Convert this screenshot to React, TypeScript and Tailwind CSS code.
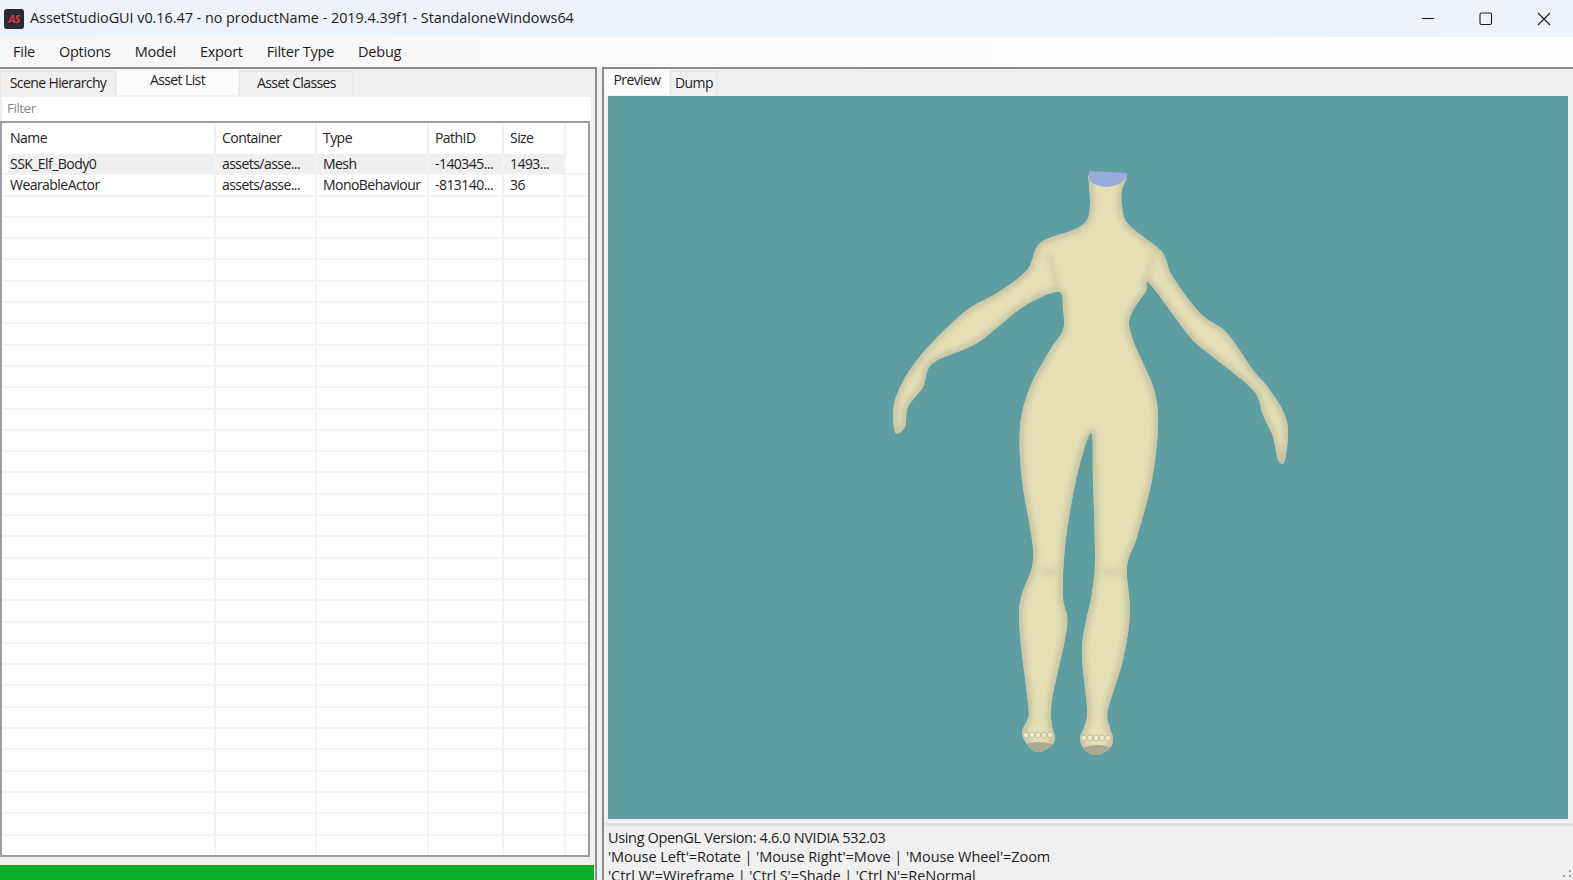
import React from "react";

const font = { fontFamily: '"Open Sans", "Noto Sans", sans-serif' };

const outline: [number, number][] = [
  [1090, 174], [1108, 175], [1126, 176], [1122, 190], [1122, 205], [1128, 224], [1157, 247], [1165, 257], [1173, 277], [1200, 313],
  [1227, 333], [1253, 370], [1270, 390], [1287, 422], [1285, 460], [1278, 460], [1273, 437], [1263, 415], [1253, 390], [1213, 357],
  [1190, 337], [1150, 284], [1146, 291], [1130, 317], [1132, 337], [1143, 363], [1155, 393], [1158, 427], [1152, 480], [1137, 537],
  [1127, 567], [1130, 613], [1123, 660], [1108, 710], [1110, 728], [1113, 738], [1110, 748], [1097, 755], [1085, 750], [1080, 738],
  [1085, 725], [1087, 707], [1082, 647], [1092, 593], [1095, 557], [1093, 480], [1091, 433], [1076, 480], [1065, 547], [1063, 597],
  [1067, 627], [1052, 700], [1052, 725], [1055, 737], [1052, 745], [1040, 752], [1030, 748], [1022, 733], [1028, 718], [1028, 703],
  [1019, 613], [1032, 567], [1032, 540], [1022, 480], [1020, 427], [1030, 387], [1050, 350], [1063, 330], [1063, 310], [1058, 292],
  [1023, 307], [977, 343], [933, 363], [923, 387], [908, 407], [905, 427], [895, 432], [895, 400], [917, 360], [963, 313],
  [997, 293], [1027, 270], [1040, 243], [1073, 230], [1087, 220], [1090, 203], [1089, 184],
];

function smoothPath(pts: [number, number][]) {
  const n = pts.length;
  const t = 6;
  let d = `M${pts[0][0]} ${pts[0][1]}`;
  for (let i = 0; i < n; i++) {
    const p0 = pts[(i - 1 + n) % n];
    const p1 = pts[i];
    const p2 = pts[(i + 1) % n];
    const p3 = pts[(i + 2) % n];
    const c1x = p1[0] + (p2[0] - p0[0]) / t;
    const c1y = p1[1] + (p2[1] - p0[1]) / t;
    const c2x = p2[0] - (p3[0] - p1[0]) / t;
    const c2y = p2[1] - (p3[1] - p1[1]) / t;
    d += ` C${c1x} ${c1y} ${c2x} ${c2y} ${p2[0]} ${p2[1]}`;
  }
  return d + " Z";
}

const toesLeft = [1026, 1032, 1038, 1044, 1050];
const toesRight = [1084, 1090, 1096, 1102, 1108];

function Mannequin() {
  const d = smoothPath(outline);
  return (
    <svg className="block w-full h-full" viewBox="608 96 960 723">
      <defs>
        <clipPath id="bodyClip"><path d={d} /></clipPath>
        <filter id="soft" x="-10%" y="-10%" width="120%" height="120%"><feGaussianBlur stdDeviation="3" /></filter>
      </defs>
      <path d={d} fill="#e6dfb4" />
      <g clipPath="url(#bodyClip)">
        <path d={d} fill="none" stroke="#b9ba9f" strokeWidth="6" filter="url(#soft)" />
        <g fill="none" stroke="#cfcba4" strokeWidth="4" filter="url(#soft)">
          <path d="M1047 253 Q1056 270 1058 292" />
          <path d="M1156 250 Q1148 268 1146 291" />
          <path d="M1040 568 Q1050 578 1060 568" />
          <path d="M1098 568 Q1110 578 1122 568" />
        </g>
        <ellipse cx="1039" cy="749" rx="17" ry="7" fill="#aaa993" />
        <ellipse cx="1097" cy="752" rx="17" ry="7" fill="#aaa993" />
        <g fill="#efe9c4" stroke="#b5b39a" strokeWidth="0.7">
          {toesLeft.map((x) => <circle key={x} cx={x} cy="735" r="2.8" />)}
          {toesRight.map((x) => <circle key={x} cx={x} cy="738" r="2.8" />)}
        </g>
      </g>
      <path d="M1089 171 L1127 173 L1127 176 Q1120 187 1107 187 Q1094 186 1089 180 Z" fill="#99a9da" />
    </svg>
  );
}

const cols = [208, 101, 112, 75, 62, 23];
const header = ["Name", "Container", "Type", "PathID", "Size", ""];
const data = [
  ["SSK_Elf_Body0", "assets/asse...", "Mesh", "-140345...", "1493...", ""],
  ["WearableActor", "assets/asse...", "MonoBehaviour", "-813140...", "36", ""],
];
const emptyRows = Array.from({ length: 31 }, (_, i) => i);

function Row({ cells, selected }: { cells: string[]; selected?: boolean }) {
  return (
    <div className="flex h-[21.3px] shrink-0 border-b-2 border-[#f3f3f3] pl-[6px]">
      {cells.map((c, i) => (
        <div
          key={i}
          style={{ width: cols[i] }}
          className={`shrink-0 whitespace-nowrap overflow-hidden text-[14px] leading-[20px] tracking-[-0.55px] text-[#222] ${
            i === 0 ? "pl-[2px]" : "pl-[6px]"
          } ${i < 5 ? "border-r-2 border-[#f3f3f3]" : ""} ${selected && i < 5 ? "bg-[#efefef] border-[#efefef]" : ""}`}
        >
          {c}
        </div>
      ))}
    </div>
  );
}

function TabBtn({ label, active, w }: { label: string; active?: boolean; w: string }) {
  return (
    <div
      className={`${w} flex justify-center text-[14px] tracking-[-0.6px] text-[#222] border border-b-0 ${
        active
          ? "h-[26px] bg-[#fafafa] border-[#f3f3f3] leading-[19px]"
          : "h-[24px] mt-[2px] bg-[#f0f0f0] border-[#e4e4e4] leading-[21px]"
      }`}
    >
      {label}
    </div>
  );
}

function WinIcon({ children }: { children: React.ReactNode }) {
  return (
    <svg width="14" height="14" viewBox="0 0 14 14" fill="none" stroke="#1a1a1a" strokeWidth="1.1">
      {children}
    </svg>
  );
}

export default function App() {
  return (
    <div style={font} className="relative w-[1573px] h-[880px] overflow-hidden flex flex-col bg-[#f0f0f0] text-[#1c1c1c]">
      <div className="h-[37px] shrink-0 flex items-center bg-[#eef2f9]">
        <div className="ml-[4px] w-[20px] h-[20px] rounded-[3px] bg-[#2a2b33] flex items-center justify-center text-[11px] font-bold italic text-[#e8343f] leading-none tracking-[-0.5px]">
          AS
        </div>
        <div className="ml-[6px] -mt-[1px] text-[14.4px] tracking-[-0.03px] whitespace-nowrap">
          AssetStudioGUI v0.16.47 - no productName - 2019.4.39f1 - StandaloneWindows64
        </div>
        <div className="ml-auto flex items-center gap-[44px] pr-[22px]">
          <WinIcon><path d="M1 6.5H13" /></WinIcon>
          <WinIcon><rect x="1" y="1" width="11.5" height="11.5" rx="1.5" /></WinIcon>
          <WinIcon><path d="M1 1L13 13M13 1L1 13" /></WinIcon>
        </div>
      </div>

      <div className="h-[30px] shrink-0 flex items-center pl-[13px] gap-[24px] bg-gradient-to-r from-[#f6f6f6] to-[#fdfdfd] text-[14.5px] tracking-[-0.25px]">
        {["File", "Options", "Model", "Export", "Filter Type", "Debug"].map((m) => (
          <span key={m}>{m}</span>
        ))}
      </div>

      <div className="flex-1 min-h-0 flex">
        <div className="w-[597px] shrink-0 flex flex-col border-t-2 border-r-2 border-[#8c8c8c]">
          <div className="h-[28px] shrink-0 flex items-start">
            <TabBtn label="Scene Hierarchy" w="w-[116px]" />
            <TabBtn label="Asset List" active w="w-[123px]" />
            <TabBtn label="Asset Classes" w="w-[115px]" />
          </div>
          <div className="h-[24px] shrink-0 w-[589px] ml-[2px] bg-white pl-[5px] text-[13.5px] leading-[22px] tracking-[-0.5px] text-[#8a8a8a]">
            Filter
          </div>
          <div className="h-[736px] shrink-0 w-[590px] flex flex-col bg-white border-2 border-[#9c9ea1] overflow-hidden">
            <div className="flex h-[31px] shrink-0 pl-[6px] border-b-0">
              {header.map((c, i) => (
                <div
                  key={i}
                  style={{ width: cols[i] }}
                  className={`shrink-0 text-[14px] leading-[30px] tracking-[-0.55px] text-[#222] ${
                    i === 0 ? "pl-[2px]" : "pl-[6px]"
                  } ${i < 5 ? "border-r-2 border-[#f0f0f0]" : ""}`}
                >
                  {c}
                </div>
              ))}
            </div>
            {data.map((d, i) => (
              <Row key={i} cells={d} selected={i === 0} />
            ))}
            {emptyRows.map((i) => (
              <Row key={i} cells={["", "", "", "", "", ""]} />
            ))}
          </div>
          <div className="mt-[8px] h-[15px] shrink-0 w-[594px] bg-[#06b025]" />
        </div>

        <div className="w-[5px] shrink-0" />

        <div className="flex-1 min-w-0 flex flex-col border-t-2 border-l-2 border-[#8c8c8c]">
          <div className="h-[27px] shrink-0 flex items-start">
            <TabBtn label="Preview" active w="w-[66px]" />
            <TabBtn label="Dump" w="w-[48px]" />
          </div>
          <div className="h-[723px] shrink-0 ml-[4px] w-[960px] bg-[#5f9ea0]">
            <Mannequin />
          </div>
          <div className="mt-[4px] h-[3px] shrink-0 bg-[#e2e2e2]" />
          <div className="flex-1 min-h-0 overflow-hidden pl-[4px] pt-[2px] text-[14.5px] leading-[19px] tracking-[-0.07px] whitespace-nowrap text-[#1c1c1c]">
            <div className="tracking-[-0.35px]">Using OpenGL Version: 4.6.0 NVIDIA 532.03</div>
            <div>'Mouse Left'=Rotate | 'Mouse Right'=Move | 'Mouse Wheel'=Zoom</div>
            <div>'Ctrl W'=Wireframe | 'Ctrl S'=Shade | 'Ctrl N'=ReNormal</div>
          </div>
        </div>
      </div>

      <svg className="absolute right-[1px] bottom-[1px]" width="10" height="10" viewBox="0 0 10 10" fill="#a0a0a0">
        <rect x="7" y="1" width="2" height="2" />
        <rect x="1" y="6" width="2" height="2" />
        <rect x="7" y="6" width="2" height="2" />
      </svg>
    </div>
  );
}
